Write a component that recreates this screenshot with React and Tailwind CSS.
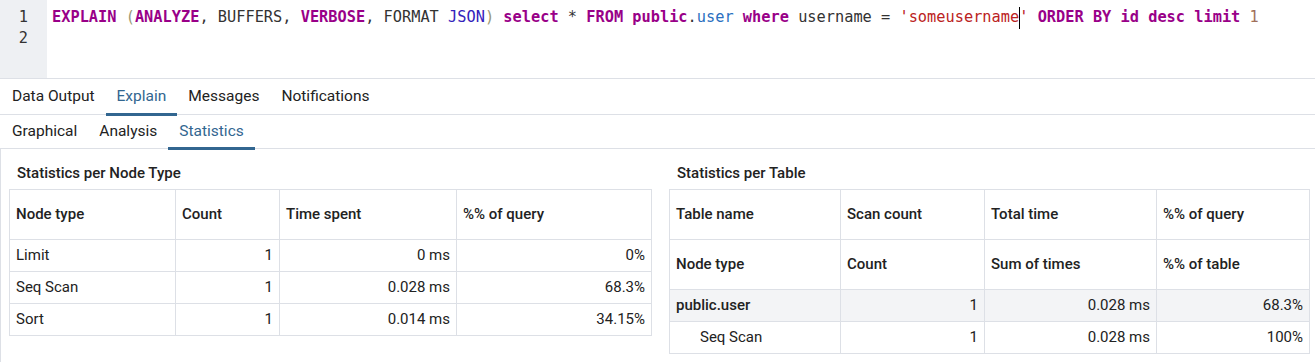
import React from 'react';

const mono = { fontFamily: '"DejaVu Sans Mono", "Liberation Mono", monospace' };

function Kw({ children }) {
  return <span className="font-bold text-[#990088]">{children}</span>;
}

function Editor() {
  return (
    <div className="flex h-[79px] border-b border-[#dde0e6] bg-white" style={mono}>
      <div className="w-[47px] bg-[#eef0f3] pt-[7px] pr-[19px] text-right text-[15.3px] leading-[21px] text-[#333]">
        <div>1</div>
        <div>2</div>
      </div>
      <div className="flex-1 pt-[7px] pl-[5px] text-[15.3px] leading-[21px] text-[#333] whitespace-pre">
        <div>
          <Kw>EXPLAIN</Kw> <span className="text-[#999977]">(</span>
          <Kw>ANALYZE</Kw>, BUFFERS, <Kw>VERBOSE</Kw>, FORMAT{' '}
          <span className="text-[#3322bb]">JSON</span>
          <span className="text-[#999977]">)</span> <Kw>select</Kw> * <Kw>FROM</Kw>{' '}
          <Kw>public</Kw>.<span className="text-[#2b6fbf]">user</span> <Kw>where</Kw> username ={' '}
          <span className="text-[#bb2222]">'someusername</span>
          <span className="relative inline-block h-[21px] w-0 align-top">
            <span className="absolute left-0 top-0 h-[22px] w-px bg-black" />
          </span>
          <span className="text-[#bb2222]">'</span> <Kw>ORDER</Kw> <Kw>BY</Kw> <Kw>id</Kw>{' '}
          <Kw>desc</Kw> <Kw>limit</Kw> <span className="text-[#a0705a]">1</span>
        </div>
        <div>&nbsp;</div>
      </div>
    </div>
  );
}

function Tabs({ items, active, height }) {
  return (
    <div className={`flex border-b border-[#dde0e6] pl-px ${height}`}>
      {items.map((t) => (
        <div
          key={t}
          className={`relative flex items-center px-[11px] text-[15.5px] ${
            t === active ? 'text-[#326690]' : 'text-[#222]'
          }`}
        >
          {t}
          {t === active && (
            <span className="absolute bottom-[-2px] left-0 right-0 h-[3px] bg-[#326690]" />
          )}
        </div>
      ))}
    </div>
  );
}

const cell = 'border border-[#dde0e6] px-[6px]';

function NodeTable() {
  const rows = [
    ['Limit', '1', '0 ms', '0%'],
    ['Seq Scan', '1', '0.028 ms', '68.3%'],
    ['Sort', '1', '0.014 ms', '34.15%'],
  ];
  return (
    <div>
      <div className="h-[40px] pl-[8px] pt-[14px] text-[15px] font-medium leading-[20px] text-[#222]">
        Statistics per Node Type
      </div>
      <table className="w-[642px] table-fixed border-collapse text-[15px] text-[#222]">
        <colgroup>
          <col className="w-[166px]" />
          <col className="w-[104px]" />
          <col className="w-[177px]" />
          <col className="w-[195px]" />
        </colgroup>
        <thead>
          <tr className="h-[50px] font-medium">
            <td className={cell}>Node type</td>
            <td className={cell}>Count</td>
            <td className={cell}>Time spent</td>
            <td className={cell}>%% of query</td>
          </tr>
        </thead>
        <tbody>
          {rows.map((r) => (
            <tr key={r[0]} className="h-[32px]">
              <td className={cell}>{r[0]}</td>
              <td className={`${cell} text-right`}>{r[1]}</td>
              <td className={`${cell} text-right`}>{r[2]}</td>
              <td className={`${cell} text-right`}>{r[3]}</td>
            </tr>
          ))}
        </tbody>
      </table>
    </div>
  );
}

function TableStats() {
  return (
    <div>
      <div className="h-[40px] pl-[8px] pt-[14px] text-[15px] font-medium leading-[20px] text-[#222]">
        Statistics per Table
      </div>
      <table className="w-[640px] table-fixed border-collapse text-[15px] text-[#222]">
        <colgroup>
          <col className="w-[171px]" />
          <col className="w-[144px]" />
          <col className="w-[172px]" />
          <col className="w-[153px]" />
        </colgroup>
        <thead>
          <tr className="h-[50px] font-medium">
            <td className={cell}>Table name</td>
            <td className={cell}>Scan count</td>
            <td className={cell}>Total time</td>
            <td className={cell}>%% of query</td>
          </tr>
          <tr className="h-[50px] font-medium">
            <td className={cell}>Node type</td>
            <td className={cell}>Count</td>
            <td className={cell}>Sum of times</td>
            <td className={cell}>%% of table</td>
          </tr>
        </thead>
        <tbody>
          <tr className="h-[32px] bg-[#f3f4f6]">
            <td className={`${cell} font-medium`}>public.user</td>
            <td className={`${cell} text-right`}>1</td>
            <td className={`${cell} text-right`}>0.028 ms</td>
            <td className={`${cell} text-right`}>68.3%</td>
          </tr>
          <tr className="h-[32px]">
            <td className={`${cell} pl-[30px]`}>Seq Scan</td>
            <td className={`${cell} text-right`}>1</td>
            <td className={`${cell} text-right`}>0.028 ms</td>
            <td className={`${cell} text-right`}>100%</td>
          </tr>
        </tbody>
      </table>
    </div>
  );
}

export default function App() {
  return (
    <div
      className="h-[362px] w-[1315px] overflow-hidden bg-white"
      style={{ fontFamily: 'Roboto, "Noto Sans", sans-serif' }}
    >
      <Editor />
      <Tabs items={['Data Output', 'Explain', 'Messages', 'Notifications']} active="Explain" height="h-[36px]" />
      <Tabs items={['Graphical', 'Analysis', 'Statistics']} active="Statistics" height="h-[34px]" />
      <div className="flex h-[213px] gap-[17px] border-l border-[#dde0e6] pl-[8px]">
        <NodeTable />
        <TableStats />
      </div>
    </div>
  );
}
